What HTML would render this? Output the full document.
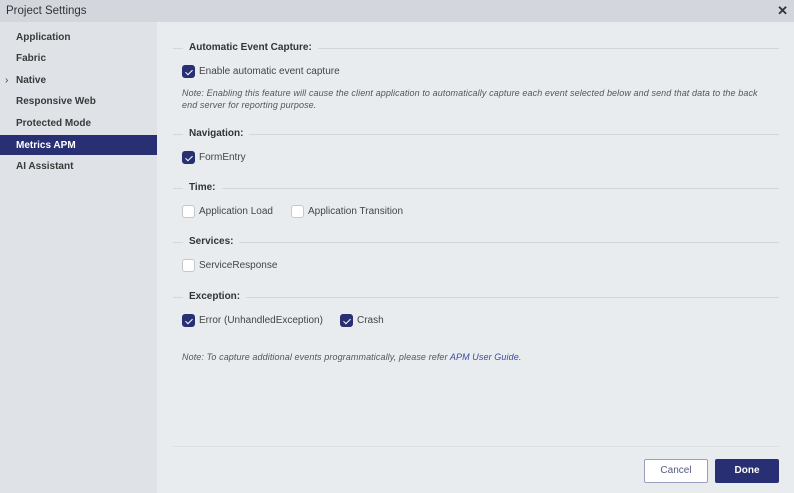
<!DOCTYPE html>
<html><head><style>
*{margin:0;padding:0;box-sizing:border-box}
body{width:794px;height:493px;overflow:hidden;font-family:"Liberation Sans",sans-serif;background:#e9ecef;position:relative;color:#333}
.hdr{position:absolute;left:0;top:0;width:794px;height:22px;background:#d3d7dd;font-size:11.5px;line-height:22px;padding-left:6px;color:#333}
.x{position:absolute;right:6px;top:0;font-weight:bold;font-size:13px}
.side{position:absolute;left:0;top:22px;width:157px;height:471px;background:#dfe2e6}
.si{position:absolute;left:0;width:157px;height:20px;line-height:20px;padding-left:16px;font-size:10px;font-weight:bold;color:#3a3a3a}
.si.sel{background:#283073;color:#fff}
.a{position:absolute;left:5px;font-weight:normal}
.sec{position:absolute;left:173px;width:606px;height:12px}
.sec .ln{position:absolute;left:0;top:6px;width:100%;height:1px;background:#d3d6da}
.sec span{position:absolute;left:10px;top:0;background:#e9ecef;padding:0 6px;font-size:10px;font-weight:bold;color:#333;line-height:12px}
.cb{position:absolute;font-size:10px;line-height:13px;color:#444;padding-left:17px}
.cb i{position:absolute;left:0;top:0;width:13px;height:13px;border-radius:3px;border:1px solid #c5c8cc;background:#fff}
.cb.on i{background:#283073;border-color:#283073}
.cb.on i:after{content:"";position:absolute;left:3.5px;top:1.5px;width:3px;height:6px;border:solid #fff;border-width:0 1.5px 1.5px 0;transform:rotate(45deg)}
.note{position:absolute;left:182px;font-size:9px;letter-spacing:.1px;font-style:italic;color:#555;line-height:12px}
.btn{position:absolute;top:459px;height:24px;width:64px;font-size:10px;text-align:center;line-height:22px;border-radius:2px}
</style></head><body>
<div class="hdr">Project Settings<span class="x">✕</span></div>
<div class="side">
<div class="si" style="top:6px">Application</div>
<div class="si" style="top:27px">Fabric</div>
<div class="si" style="top:49px"><span class="a">›</span>Native</div>
<div class="si" style="top:70px">Responsive Web</div>
<div class="si" style="top:92px">Protected Mode</div>
<div class="si sel" style="top:113px;line-height:21px">Metrics APM</div>
<div class="si" style="top:135px">AI Assistant</div>
</div>
<div class="sec" style="top:42px"><div class="ln"></div><span>Automatic Event Capture:</span></div>
<div class="cb on" style="left:182px;top:65px"><i></i>Enable automatic event capture</div>
<div class="note" style="top:87px">Note: Enabling this feature will cause the client application to automatically capture each event selected below and send that data to the back<br>end server for reporting purpose.</div>
<div class="sec" style="top:128px"><div class="ln"></div><span>Navigation:</span></div>
<div class="cb on" style="left:182px;top:151px"><i></i>FormEntry</div>
<div class="sec" style="top:182px"><div class="ln"></div><span>Time:</span></div>
<div class="cb" style="left:182px;top:205px"><i></i>Application Load</div>
<div class="cb" style="left:291px;top:205px"><i></i>Application Transition</div>
<div class="sec" style="top:236px"><div class="ln"></div><span>Services:</span></div>
<div class="cb" style="left:182px;top:259px"><i></i>ServiceResponse</div>
<div class="sec" style="top:291px"><div class="ln"></div><span>Exception:</span></div>
<div class="cb on" style="left:182px;top:314px"><i></i>Error (UnhandledException)</div>
<div class="cb on" style="left:340px;top:314px"><i></i>Crash</div>
<div class="note" style="top:351px">Note: To capture additional events programmatically, please refer <span style="color:#3a4a9a">APM User Guide</span>.</div>
<div style="position:absolute;left:173px;top:446px;width:606px;height:1px;background:#dcdfe3"></div>
<div class="btn" style="left:644px;background:#fff;border:1px solid #9a9ec0;color:#555a80">Cancel</div>
<div class="btn" style="left:715px;background:#283073;color:#fff;font-weight:bold;line-height:24px">Done</div>
</body></html>
